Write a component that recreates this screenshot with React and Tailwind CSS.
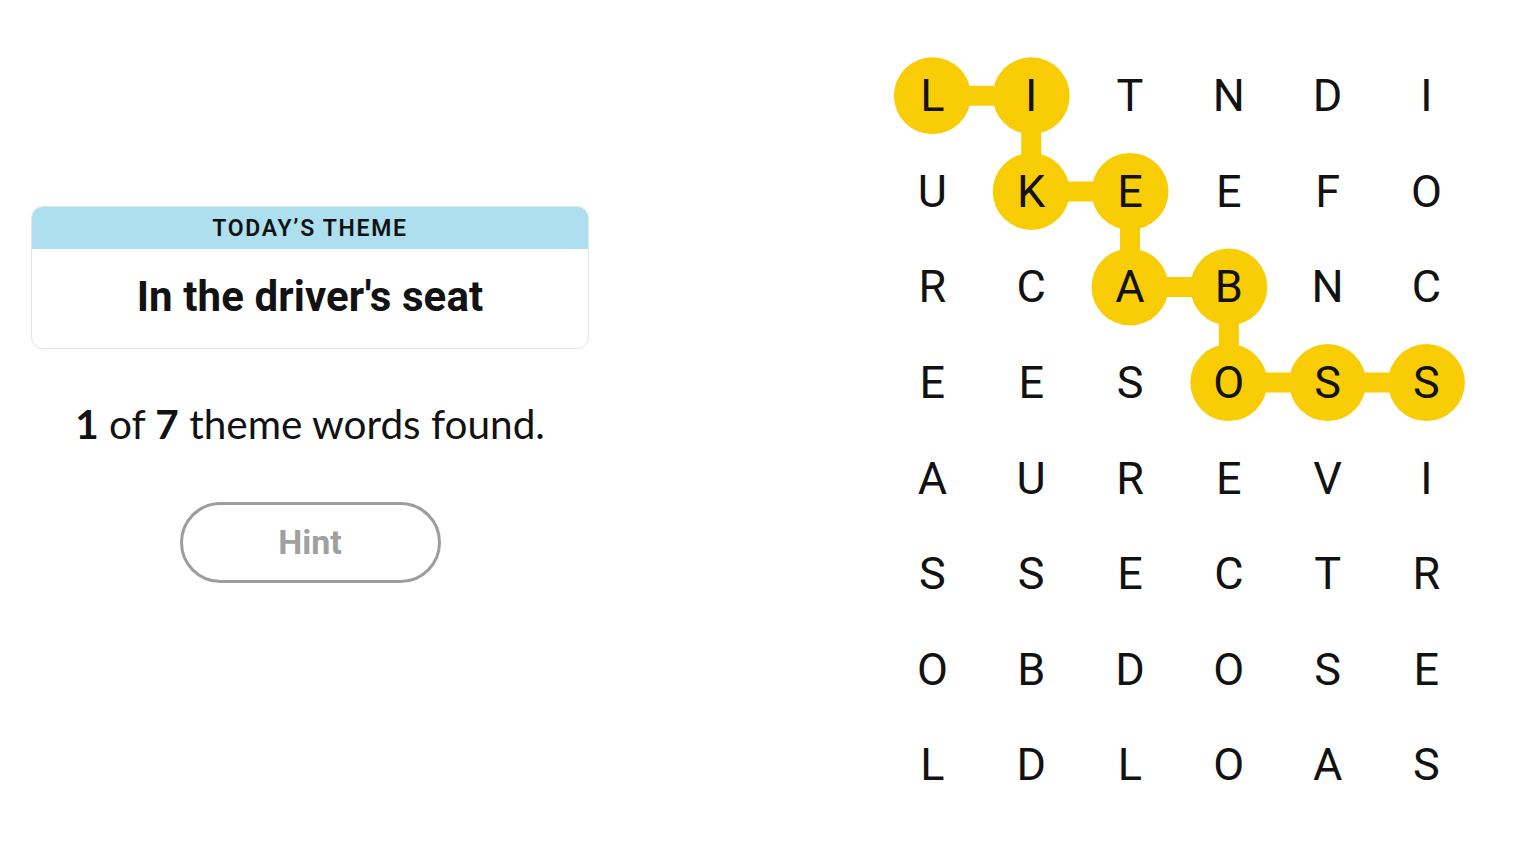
import React from "react";

const ROWS = [
  "LITNDI",
  "UKEEFO",
  "RCABNC",
  "EESOSS",
  "AUREVI",
  "SSECTR",
  "OBDOSE",
  "LDLOAS",
];

// found spangram path (row, col)
const PATH = [
  [0, 0], [0, 1], [1, 1], [1, 2], [2, 2], [2, 3], [3, 3], [3, 4], [3, 5],
];

const CW = 98.8;
const RH = 95.6;

function PathLayer() {
  const pts = PATH.map(([r, c]) => [c * CW + CW / 2, r * RH + RH / 2]);
  return (
    <svg className="absolute inset-0 pointer-events-none" width={6 * CW} height={8 * RH}>
      <polyline
        points={pts.map((p) => p.join(",")).join(" ")}
        fill="none"
        stroke="#f8cd05"
        strokeWidth="20"
      />
      {pts.map(([x, y], i) => (
        <circle key={i} cx={x} cy={y} r="38.5" fill="#f8cd05" />
      ))}
    </svg>
  );
}

export default function App() {
  return (
    <div
      className="w-[1536px] h-[864px] bg-white flex text-[#121212]"
      style={{ fontFamily: "Roboto, 'Liberation Sans', sans-serif" }}
    >
      {/* Left column */}
      <div className="w-[589px] pl-[31px] pt-[206px] flex flex-col items-center">
        <div className="w-[558px] h-[143px] rounded-[12px] border border-[#e4e4e4] overflow-hidden flex flex-col">
          <div className="h-[42px] bg-[#aedfee] flex items-center justify-center text-[23px] font-semibold tracking-[1.7px] leading-none">
            TODAY’S THEME
          </div>
          <div className="flex-1 flex items-center justify-center pb-[4px] text-[42px] font-bold tracking-[0.1px]">
            In the driver's seat
          </div>
        </div>
        <p
          className="mt-[55px] text-[40.5px] leading-none"
          style={{ fontFamily: "Lato, 'Liberation Sans', sans-serif" }}
        >
          <span className="font-bold">1</span> of <span className="font-bold">7</span> theme words found.
        </p>
        <button className="mt-[57px] w-[261px] h-[81px] rounded-full border-[3px] border-[#9d9d9d] text-[#a0a0a0] text-[34px] font-bold">
          Hint
        </button>
      </div>

      {/* Board */}
      <div className="pl-[294px] pt-[48px]">
        <div className="relative w-[593px] h-[765px]">
          <PathLayer />
          <div className="relative grid grid-cols-[repeat(6,98.8px)] grid-rows-[repeat(8,95.6px)]">
            {ROWS.map((row, r) =>
              row.split("").map((ch, c) => (
                <div
                  key={`${r}-${c}`}
                  className="flex items-center justify-center text-[45px] leading-none"
                >
                  {ch}
                </div>
              ))
            )}
          </div>
        </div>
      </div>
    </div>
  );
}
